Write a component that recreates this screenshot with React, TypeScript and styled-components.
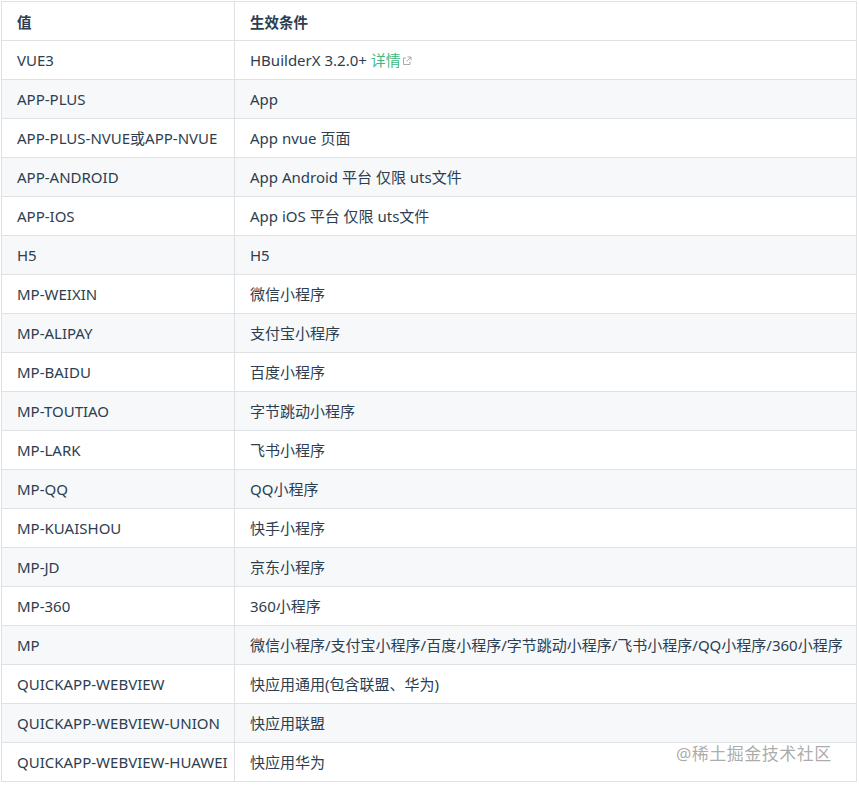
import React from "react";
import styled, { createGlobalStyle } from "styled-components";

const Global = createGlobalStyle`
  body { margin: 0; background: #fff; font-family: "Noto Sans", "Noto Sans CJK SC", sans-serif; color: #2c3e50; }
`;

const Wrap = styled.div`
  position: relative;
  padding: 1px 0 0 1px;
  width: 857px;
`;

const Table = styled.table`
  border-collapse: collapse;
  width: 856px;
  font-size: 15px;
  table-layout: fixed;
`;

const Row = styled.tr<{ $stripe?: boolean }>`
  height: 39px;
  background: ${(p) => (p.$stripe ? "#f6f8fa" : "#fff")};
`;

const Th = styled.th`
  border: 1px solid #dfe2e5;
  text-align: left;
  padding: 0 15px;
  font-weight: 700;
  font-size: 14.5px;
  color: #2c3e50;
`;

const Td = styled.td`
  border: 1px solid #dfe2e5;
  padding: 0 15px;
  white-space: nowrap;
  line-height: 20px;
`;

const Link = styled.span`
  color: #42b983;
`;

const Mark = styled.span`
  position: absolute;
  left: 676px;
  top: 740px;
  font-size: 17px;
  color: rgba(150, 150, 150, 0.8);
  letter-spacing: 0.5px;
`;

const rows: [string, string][] = [
  ["APP-PLUS", "App"],
  ["APP-PLUS-NVUE或APP-NVUE", "App nvue 页面"],
  ["APP-ANDROID", "App Android 平台 仅限 uts文件"],
  ["APP-IOS", "App iOS 平台 仅限 uts文件"],
  ["H5", "H5"],
  ["MP-WEIXIN", "微信小程序"],
  ["MP-ALIPAY", "支付宝小程序"],
  ["MP-BAIDU", "百度小程序"],
  ["MP-TOUTIAO", "字节跳动小程序"],
  ["MP-LARK", "飞书小程序"],
  ["MP-QQ", "QQ小程序"],
  ["MP-KUAISHOU", "快手小程序"],
  ["MP-JD", "京东小程序"],
  ["MP-360", "360小程序"],
  ["MP", "微信小程序/支付宝小程序/百度小程序/字节跳动小程序/飞书小程序/QQ小程序/360小程序"],
  ["QUICKAPP-WEBVIEW", "快应用通用(包含联盟、华为)"],
  ["QUICKAPP-WEBVIEW-UNION", "快应用联盟"],
  ["QUICKAPP-WEBVIEW-HUAWEI", "快应用华为"],
];

export default function App() {
  return (
    <Wrap>
      <Global />
      <Table>
        <colgroup>
          <col style={{ width: 233 }} />
          <col />
        </colgroup>
        <thead>
          <Row>
            <Th>值</Th>
            <Th>生效条件</Th>
          </Row>
        </thead>
        <tbody>
          <Row $stripe={false}>
            <Td>VUE3</Td>
            <Td>
              HBuilderX 3.2.0+ <Link>详情</Link>
              <svg width="10" height="10" viewBox="0 0 10 10" style={{ marginLeft: 1 }}>
                <path d="M4 2H1.5v6.5H8V6" fill="none" stroke="#aaa" strokeWidth="1" />
                <path d="M5.5 1H9v3.5M9 1L4.5 5.5" fill="none" stroke="#aaa" strokeWidth="1" />
              </svg>
            </Td>
          </Row>
          {rows.map(([a, b], i) => (
            <Row key={a} $stripe={i % 2 === 0}>
              <Td>{a}</Td>
              <Td>{b}</Td>
            </Row>
          ))}
        </tbody>
      </Table>
      <Mark>@稀土掘金技术社区</Mark>
    </Wrap>
  );
}
